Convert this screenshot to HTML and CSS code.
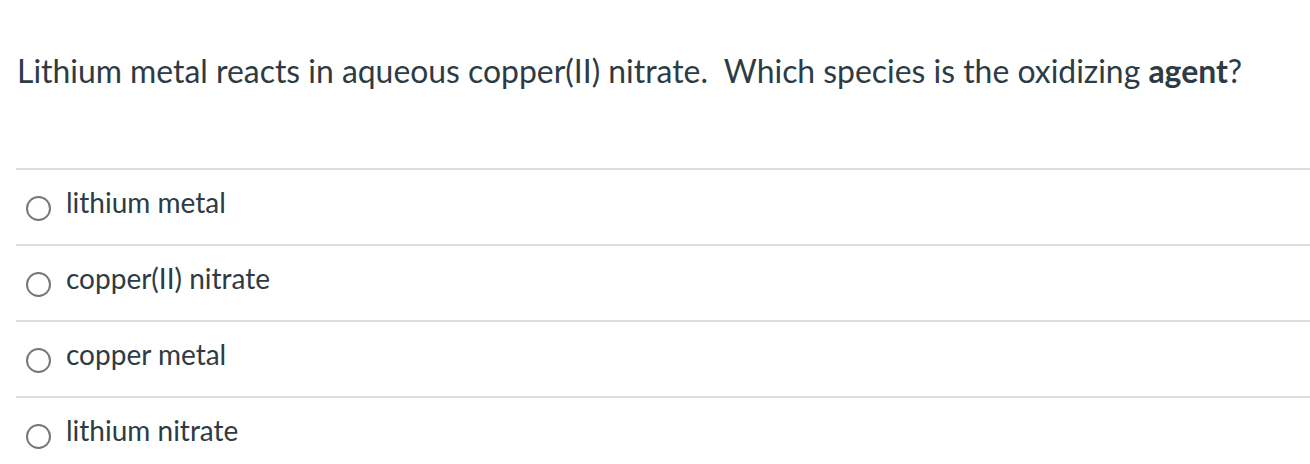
FILE: index.html
```html
<!DOCTYPE html>
<html>
<head>
<meta charset="utf-8">
<link rel="stylesheet" href="styles.css">
</head>
<body>
<div class="quiz">
  <p class="question">Lithium metal reacts in aqueous copper(II) nitrate.&nbsp; Which species is the oxidizing <strong>agent</strong>?</p>
  <div class="answers">
    <label class="answer"><span class="radio"></span><span class="text">lithium metal</span></label>
    <label class="answer"><span class="radio"></span><span class="text">copper(II) nitrate</span></label>
    <label class="answer"><span class="radio"></span><span class="text">copper metal</span></label>
    <label class="answer"><span class="radio"></span><span class="text">lithium nitrate</span></label>
  </div>
</div>
</body>
</html>
```
FILE: styles.css
```css
html, body {
  margin: 0;
  padding: 0;
  background: #fff;
}
body {
  font-family: Lato, "Open Sans", sans-serif;
  color: #2d3b45;
}
.quiz {
  padding: 0 0 0 16px;
}
.question {
  margin: 0;
  padding: 49px 0 0 1px;
  font-size: 31.9px;
  line-height: 44px;
  height: 119px;
}
.question strong {
  font-weight: 700;
}
.answers {
  display: flex;
  flex-direction: column;
}
.answer {
  display: flex;
  align-items: center;
  height: 74px;
  border-top: 2px solid #dddddd;
  padding-left: 10px;
  font-size: 28px;
}
.radio {
  width: 21px;
  height: 21px;
  border: 2px solid #777;
  border-radius: 50%;
  margin: 2px 15px 0 0;
  flex: none;
}
.text {
  margin-bottom: 11px;
}
```
